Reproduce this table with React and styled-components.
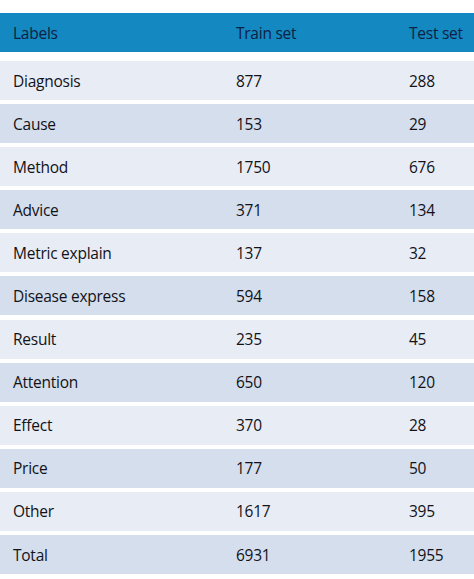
import React from 'react'
import styled, { createGlobalStyle } from 'styled-components'

const rows = [
	['Diagnosis', '877', '288'],
	['Cause', '153', '29'],
	['Method', '1750', '676'],
	['Advice', '371', '134'],
	['Metric explain', '137', '32'],
	['Disease express', '594', '158'],
	['Result', '235', '45'],
	['Attention', '650', '120'],
	['Effect', '370', '28'],
	['Price', '177', '50'],
	['Other', '1617', '395'],
	['Total', '6931', '1955'],
]

const App = () => {
	return (
		<>
			<GlobalStyle />
			<Page>
				<Header>
					<Cell>Labels</Cell>
					<Cell>Train set</Cell>
					<Cell>Test set</Cell>
				</Header>
				<Body>
					{rows.map((r, i) => (
						<Row key={r[0]} $shade={i % 2 === 1}>
							<Cell>{r[0]}</Cell>
							<Cell>{r[1]}</Cell>
							<Cell>{r[2]}</Cell>
						</Row>
					))}
				</Body>
			</Page>
		</>
	)
}

const GlobalStyle = createGlobalStyle`
body {
	margin: 0;
	background: #ffffff;
	font-family: "Open Sans", "DejaVu Sans", sans-serif;
}
`

const Page = styled.div`
width: 474px;
padding-top: 13px;
`

const Line = styled.div`
display: grid;
grid-template-columns: 223px 173px 1fr;
align-items: center;
height: 39px;
font-size: 15.5px;
font-weight: 500;
letter-spacing: -0.25px;
`

const Header = styled(Line)`
background-color: #1488c1;
color: #0e2142;
`

const Body = styled.div`
display: flex;
flex-direction: column;
gap: 4.1px;
margin-top: 9px;
`

const Row = styled(Line)`
background-color: ${p => (p.$shade ? '#d4deed' : '#e8ecf5')};
color: #121218;
`

const Cell = styled.div`
padding-left: 13px;
white-space: nowrap;
`

export default App
